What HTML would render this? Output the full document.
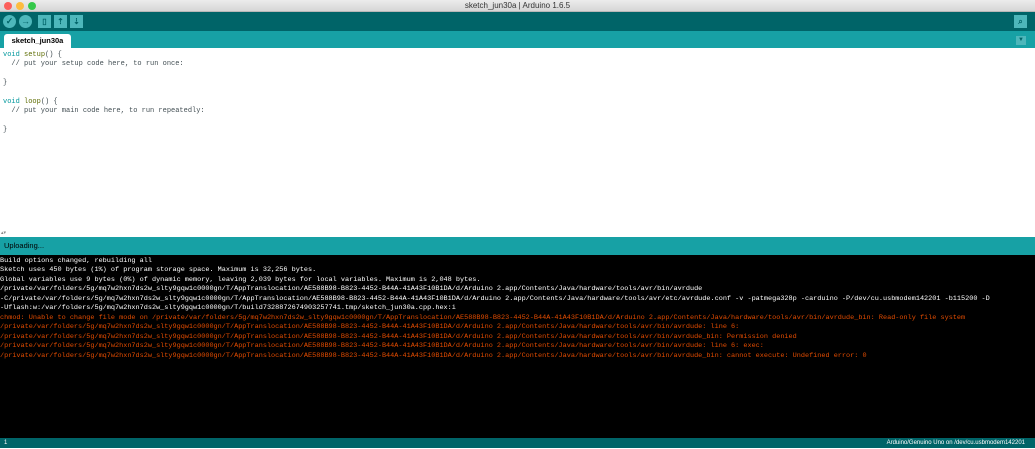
<!DOCTYPE html>
<html><head><style>
*{margin:0;padding:0;box-sizing:border-box}
body{width:1035px;height:448px;overflow:hidden;background:#fff;font-family:"Liberation Sans",sans-serif;position:relative}
.abs{position:absolute}
#title{top:0;left:0;width:1035px;height:12px;background:linear-gradient(#ececec,#d6d6d6);border-bottom:1px solid #b8b8b8;text-align:center;font-size:8px;line-height:12px;color:#333}
.dot{position:absolute;top:2px;width:8px;height:8px;border-radius:50%}
#tb{top:12px;left:0;width:1035px;height:19px;background:#006468}
.cb{position:absolute;top:3px;width:13px;height:13px;border-radius:50%;background:#4db7bb;color:#006468;font-size:9px;line-height:13px;text-align:center;font-weight:bold}
.sb{position:absolute;top:3px;width:13px;height:13px;background:#4db7bb;color:#006468;font-size:8px;line-height:13px;text-align:center;font-weight:bold}
#tabs{top:31px;left:0;width:1035px;height:17px;background:#17a1a5}
#tab{position:absolute;left:4px;top:3px;width:67px;height:14px;background:#fff;border-radius:3px 3px 0 0;font-size:7.5px;font-weight:bold;line-height:14px;text-align:center;color:#000}
pre{font-family:"Liberation Mono",monospace;white-space:pre}
#code{top:50px;left:3px;font-size:7px;line-height:9.4px;color:#434f54}
.k{color:#00979c}.f{color:#5e6d03}
#st{top:237px;left:0;width:1035px;height:18px;background:#17a1a5;font-size:7.5px;line-height:18px;padding-left:4px;color:#000}
#con{top:255px;left:0;width:1035px;height:183px;background:#000}
#ct{top:257px;left:0;font-size:6.85px;line-height:9.45px;color:#fff}
.e{color:#e34c00}
#bot{top:438px;left:0;width:1035px;height:10px;background:#006468;color:#fff;font-size:6px;line-height:11px}
</style></head><body>
<div id="title" class="abs">sketch_jun30a | Arduino 1.6.5
<span class="dot" style="left:4px;background:#fc605c"></span><span class="dot" style="left:16px;background:#fdbc40"></span><span class="dot" style="left:28px;background:#34c84a"></span></div>
<div id="tb" class="abs">
<div class="cb" style="left:3px">✓</div><div class="cb" style="left:19px">→</div>
<div class="sb" style="left:38px">▯</div><div class="sb" style="left:54px">⇡</div><div class="sb" style="left:70px">⇣</div>
<div class="sb" style="left:1014px;top:3px">⌕</div></div>
<div id="tabs" class="abs"><div id="tab">sketch_jun30a</div>
<div style="position:absolute;left:1016px;top:5px;width:10px;height:9px;background:#4db7bb;color:#006468;font-size:6px;text-align:center;line-height:9px">▼</div></div>
<pre id="code" class="abs" style="top:51px"><span class="k">void</span> <span class="f">setup</span>() {
  // put your setup code here, to run once:

}

<span class="k">void</span> <span class="f">loop</span>() {
  // put your main code here, to run repeatedly:

}</pre>
<div class="abs" style="top:230px;left:1px;font-size:5px;color:#888">▴▾</div>
<div id="st" class="abs">Uploading...</div>
<div id="con" class="abs"></div>
<pre id="ct" class="abs">Build options changed, rebuilding all
Sketch uses 450 bytes (1%) of program storage space. Maximum is 32,256 bytes.
Global variables use 9 bytes (0%) of dynamic memory, leaving 2,039 bytes for local variables. Maximum is 2,048 bytes.
/private/var/folders/5g/mq7w2hxn7ds2w_slty9gqw1c0000gn/T/AppTranslocation/AE588B98-B823-4452-B44A-41A43F10B1DA/d/Arduino 2.app/Contents/Java/hardware/tools/avr/bin/avrdude
-C/private/var/folders/5g/mq7w2hxn7ds2w_slty9gqw1c0000gn/T/AppTranslocation/AE588B98-B823-4452-B44A-41A43F10B1DA/d/Arduino 2.app/Contents/Java/hardware/tools/avr/etc/avrdude.conf -v -patmega328p -carduino -P/dev/cu.usbmodem142201 -b115200 -D
-Uflash:w:/var/folders/5g/mq7w2hxn7ds2w_slty9gqw1c0000gn/T/build7328872674903257741.tmp/sketch_jun30a.cpp.hex:i
<span class="e">chmod: Unable to change file mode on /private/var/folders/5g/mq7w2hxn7ds2w_slty9gqw1c0000gn/T/AppTranslocation/AE588B98-B823-4452-B44A-41A43F10B1DA/d/Arduino 2.app/Contents/Java/hardware/tools/avr/bin/avrdude_bin: Read-only file system
/private/var/folders/5g/mq7w2hxn7ds2w_slty9gqw1c0000gn/T/AppTranslocation/AE588B98-B823-4452-B44A-41A43F10B1DA/d/Arduino 2.app/Contents/Java/hardware/tools/avr/bin/avrdude: line 6:
/private/var/folders/5g/mq7w2hxn7ds2w_slty9gqw1c0000gn/T/AppTranslocation/AE588B98-B823-4452-B44A-41A43F10B1DA/d/Arduino 2.app/Contents/Java/hardware/tools/avr/bin/avrdude_bin: Permission denied
/private/var/folders/5g/mq7w2hxn7ds2w_slty9gqw1c0000gn/T/AppTranslocation/AE588B98-B823-4452-B44A-41A43F10B1DA/d/Arduino 2.app/Contents/Java/hardware/tools/avr/bin/avrdude: line 6: exec:
/private/var/folders/5g/mq7w2hxn7ds2w_slty9gqw1c0000gn/T/AppTranslocation/AE588B98-B823-4452-B44A-41A43F10B1DA/d/Arduino 2.app/Contents/Java/hardware/tools/avr/bin/avrdude_bin: cannot execute: Undefined error: 0</span></pre>
<div id="bot" class="abs"><span style="position:absolute;left:4px">1</span><span style="position:absolute;right:10px">Arduino/Genuino Uno on /dev/cu.usbmodem142201</span></div>
</body></html>
